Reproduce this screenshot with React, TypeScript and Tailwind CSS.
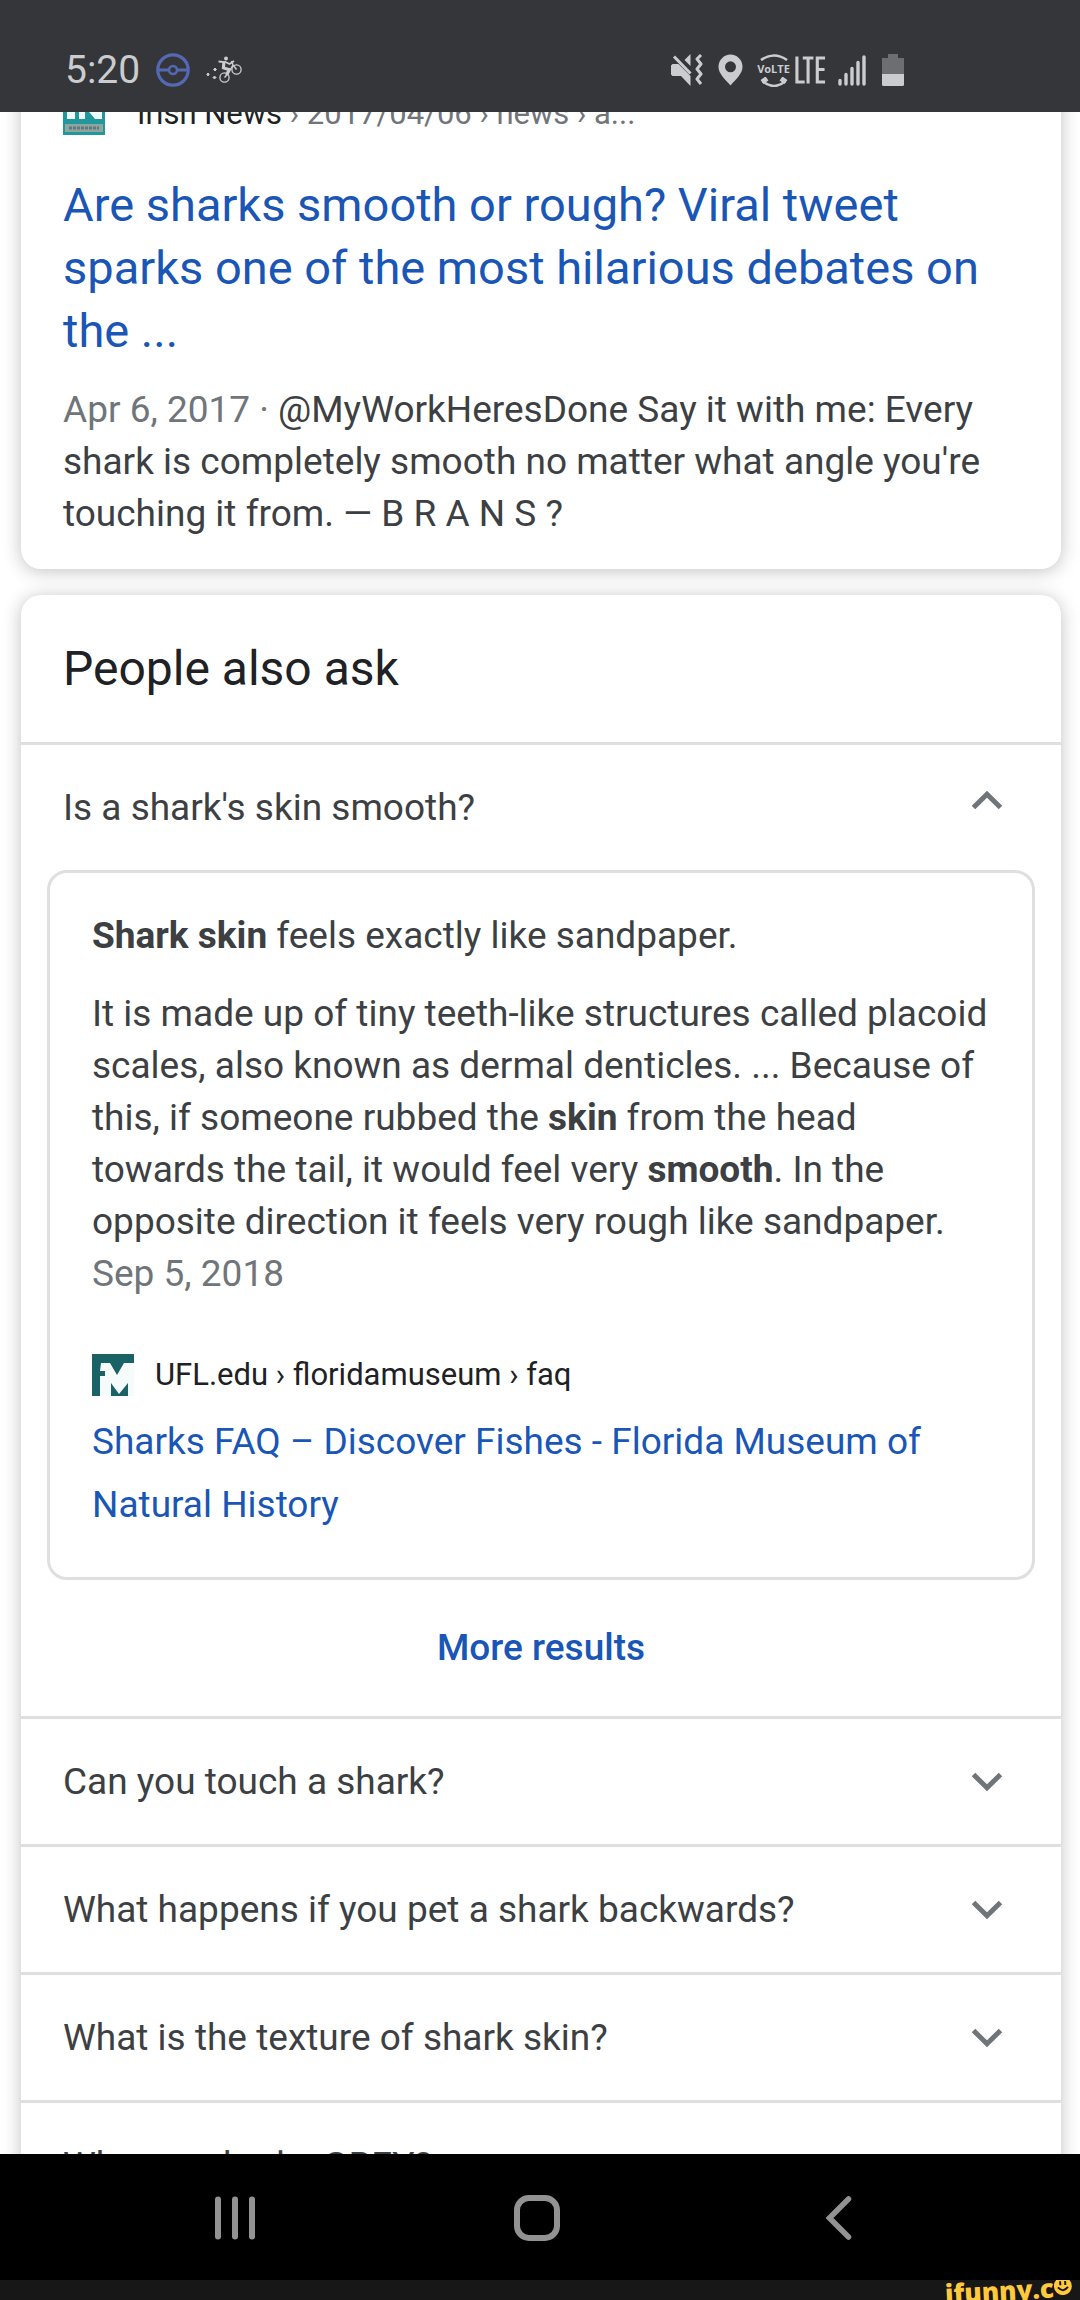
import type { ReactNode } from "react";

function Chevron({ up = false }: { up?: boolean }) {
  return (
    <svg
      viewBox="0 0 32 20"
      className={up ? "mb-4 h-5 w-8 shrink-0" : "h-5 w-8 shrink-0"}
      fill="none"
      stroke="#70757a"
      strokeWidth="5"
      aria-hidden="true"
    >
      <path d={up ? "M2.5 17.5 16 4.2l13.5 13.3" : "M2.5 2.5 16 15.8 29.5 2.5"} />
    </svg>
  );
}

function Question({ children, open = false }: { children: ReactNode; open?: boolean }) {
  return (
    <button
      type="button"
      aria-expanded={open}
      className="flex h-32 w-full items-center justify-between border-t-3 border-[#dfdfdf] pr-[58px] pl-[42px] text-left text-[37px] leading-[52px] text-[#3c4043]"
    >
      <span>{children}</span>
      <Chevron up={open} />
    </button>
  );
}

function StatusBar() {
  return (
    <header className="flex h-28 shrink-0 items-center justify-between bg-[#35363a] pt-7 pr-[176px] pl-[65px] text-[#cbccd0]">
      <div className="flex items-center gap-4">
        <span className="text-[39px] leading-[44px]">5:20</span>
        <svg viewBox="0 0 34 34" className="size-[34px]" fill="none" stroke="#5468b4" aria-label="Pokéball">
          <circle cx="17" cy="17" r="15.2" strokeWidth="3.2" />
          <circle cx="17" cy="17" r="4" strokeWidth="2.6" />
          <path d="M2 17h10.500M21.500 17H32" strokeWidth="3" />
        </svg>
        <svg viewBox="0 0 36 28" className="h-7 w-9" fill="none" stroke="#cbccd0" aria-label="Cyclist">
          <circle cx="18.500" cy="21.500" r="4.600" strokeWidth="1.300" />
          <circle cx="30.500" cy="13.500" r="4.600" strokeWidth="1.300" />
          <circle cx="20" cy="2.500" r="2" fill="#cbccd0" stroke="none" />
          <path d="M12.500 5.500 18 6l-1.500 6.500M18.500 5.500l5 2.500 4.500-3" strokeWidth="1.800" />
          <path d="m18 6-.5 6 5.500 1.500-2.500 5.500" strokeWidth="3" />
          <path d="m18.500 21.500 4-4.500 4.500-8 3.500 4.500M27 9l-1.500-4" strokeWidth="1.500" />
          <path d="m2 17 1.200 1.200L2 20 .8 18.200zM9 12l1.500 1.500L9 15l-1.500-1.500zM8.500 20l1.500 1.500L8.500 23 7 21.500z" fill="#cbccd0" />
        </svg>
      </div>
      <div className="flex items-center">
        <svg viewBox="0 0 32 32" className="mr-[15px] size-8" fill="#cbccd0" aria-label="Sound off, vibrate">
          <path d="M1.500 10h6l12 12v10L10 22H1.500L0 20.500v-9z" />
          <path d="m13.500 6 6-6v12z" />
          <path d="m3 2.500 16.500 17" stroke="#cbccd0" strokeWidth="3" />
          <path d="m30 1-4 4 4 5-4 5 4 5-4 5 4 5" fill="none" stroke="#cbccd0" strokeWidth="3" strokeLinejoin="round" />
        </svg>
        <svg viewBox="0 0 26 32" className="mr-[15px] h-8 w-[25px]" fill="#cbccd0" fillRule="evenodd" aria-label="Location">
          <path d="M13 0a12.500 12.500 0 0 0-12.500 12.500C.5 20 8 26 13 32c5-6 12.500-12 12.500-19.500A12.500 12.500 0 0 0 13 0zm0 7a5.700 5.700 0 1 1 0 11.400A5.700 5.700 0 0 1 13 7z" />
        </svg>
        <div className="mr-[6px] flex w-[31px] flex-col items-center" aria-label="VoLTE">
          <svg viewBox="0 0 28 7" className="h-[7px] w-7" fill="none" stroke="#cbccd0" strokeWidth="2.600">
            <path d="M1 6q13-9 26 0" />
          </svg>
          <span className="font-['Open_Sans'] text-[11px] leading-[16px] font-bold">VoLTE</span>
          <svg viewBox="0 0 28 10" className="h-[10px] w-7" fill="none" stroke="#cbccd0">
            <path d="M2.500 4q11.500 10 23 0" strokeWidth="2.400" />
            <path d="m2 5 5-3.500M26 5l-5-3.500" strokeWidth="5" />
          </svg>
        </div>
        <svg viewBox="0 0 32 28" className="mr-3 h-7 w-[31px]" fill="none" stroke="#cbccd0" strokeWidth="3.200" aria-label="LTE">
          <path d="M2 0v26.400h8M8 1.600h11M13.500 1.600V28M31 1.600h-8v24.800h8M23 13.500h7.500" />
        </svg>
        <svg viewBox="0 0 28 32" className="mr-4 h-8 w-7" stroke="#cbccd0" strokeWidth="3.400" strokeLinecap="round" aria-label="Signal">
          <path d="M2 26.500v3.500M8 20.500V30M14 14.500V30M20 8.500V30M26 3v27" />
        </svg>
        <svg viewBox="0 0 22 32" className="h-8 w-[22px]" aria-label="Battery">
          <path d="M6 0h10v4h6v18H0V4h6z" fill="#6d6e72" />
          <path d="M0 20h22v10.500q0 1.500-1.500 1.500h-19Q0 32 0 30.500z" fill="#cbccd0" />
        </svg>
      </div>
    </header>
  );
}

function SearchResult() {
  return (
    <article className="-mt-12 rounded-b-[20px] bg-white px-[42px] pt-[29px] pb-[29px] shadow-[0_2px_18px_rgba(32,33,36,0.28)]">
      <div className="flex items-center gap-8 text-[31px] leading-[42px]">
        <svg viewBox="0 0 42 42" className="size-[42px]" aria-hidden="true">
          <path d="M0 0h42v42H0z" fill="#23989c" />
          <path d="M4 5h8v21H4zM16 5h6l11 14V5h6v21h-7L22 14v12h-6z" fill="#eefcfc" />
          <path d="M2 31h38v8H2z" fill="#8fa5a2" />
          <path d="M6 35h30" stroke="#5f7c7a" strokeWidth="3" strokeDasharray="3 1" />
        </svg>
        <p className="text-[#70757a]">
          <span className="text-[#202124]">Irish News</span> › 2017/04/06 › news › a...
        </p>
      </div>
      <h2 className="mt-[38px] text-[47px] leading-[63px] text-[#1a56b6]">
        <a href="#article">Are sharks smooth or rough? Viral tweet sparks one of the most hilarious debates on the ...</a>
      </h2>
      <p className="mt-[22px] text-[37px] leading-[52px] text-[#3c4043]">
        <span className="text-[#70757a]">Apr 6, 2017 · </span>
        @MyWorkHeresDone Say it with me: Every shark is completely smooth no matter what angle you're touching it from. — B R A N S ?
      </p>
    </article>
  );
}

function Answer() {
  return (
    <div className="mx-[26px] rounded-[20px] border-3 border-[#dfdfdf] px-[42px] pt-[37px] pb-[41px] text-[37px] leading-[52px] text-[#3c4043]">
      <p>
        <b>Shark skin</b> feels exactly like sandpaper.
      </p>
      <p className="mt-[26px]">
        It is made up of tiny teeth-like structures called placoid scales, also known as dermal denticles. ... Because of this, if someone
        rubbed the <b>skin</b> from the head towards the tail, it would feel very <b>smooth</b>. In the opposite direction it feels very rough like
        sandpaper. <span className="text-[#70757a]">Sep 5, 2018</span>
      </p>
      <div className="mt-[54px] flex items-center gap-[21px] text-[31px] leading-[42px] text-[#202124]">
        <svg viewBox="0 0 42 42" className="size-[42px]" aria-hidden="true">
          <path d="M0 0h42v42H0z" fill="#1b6267" />
          <path d="M9 9h9l7 12 7-12h10v33h-6V29l-9 11-8-11v13H8V22h5v-5H8z" fill="#f4fbfa" />
        </svg>
        <span>UFL.edu › floridamuseum › faq</span>
      </div>
      <a href="#faq" className="mt-[14px] block leading-[63px] text-[#1a56b6]">
        Sharks FAQ – Discover Fishes - Florida Museum of Natural History
      </a>
    </div>
  );
}

function PeopleAlsoAsk() {
  return (
    <section className="mt-[26px] rounded-t-[20px] bg-white shadow-[0_2px_18px_rgba(32,33,36,0.28)]">
      <h2 className="p-[42px] text-[48px] leading-[63px] text-[#202124]">People also ask</h2>
      <Question open>Is a shark's skin smooth?</Question>
      <Answer />
      <a href="#more" className="block py-[42px] text-center text-[37px] leading-[52px] font-medium text-[#1a56b6]">
        More results
      </a>
      <Question>Can you touch a shark?</Question>
      <Question>What happens if you pet a shark backwards?</Question>
      <Question>What is the texture of shark skin?</Question>
      <Question>Why are sharks GREY?</Question>
    </section>
  );
}

function NavigationBar() {
  return (
    <nav className="flex h-[126px] shrink-0 items-center justify-center gap-[206px] bg-black pt-[2px] pr-[6px] text-[#929292]">
      <button type="button" aria-label="Recent apps" className="flex w-24 justify-center">
        <svg viewBox="0 0 42 46" className="h-[46px] w-[42px]" fill="none" stroke="currentColor" strokeWidth="6" strokeLinecap="round">
          <path d="M4 4.500v37M21 4.500v37M38 4.500v37" />
        </svg>
      </button>
      <button type="button" aria-label="Home" className="flex w-24 justify-center">
        <svg viewBox="0 0 46 46" className="size-[46px]" fill="none" stroke="currentColor" strokeWidth="6">
          <rect x="3" y="3" width="40" height="40" rx="12" />
        </svg>
      </button>
      <button type="button" aria-label="Back" className="flex w-24 justify-center">
        <svg viewBox="0 0 26 44" className="h-11 w-[26px]" fill="none" stroke="currentColor" strokeWidth="5.500" strokeLinecap="round">
          <path d="M22.500 3 3.500 22l19 19" />
        </svg>
      </button>
    </nav>
  );
}

function Watermark() {
  return (
    <footer className="flex h-5 shrink-0 justify-end overflow-hidden bg-[#171718] pr-2 text-[#ffc83d]">
      <div className="flex -rotate-3 items-start">
        <span className="font-['Open_Sans'] text-[26px] leading-[20px] font-extrabold">ifunny.c</span>
        <svg viewBox="0 0 18 18" className="size-[18px]" aria-hidden="true">
          <circle cx="9" cy="9" r="9" fill="currentColor" />
          <path d="M6.500 4v4M11.500 4v4M4 10q5 6 10 0" stroke="#171718" strokeWidth="2" fill="none" />
        </svg>
      </div>
    </footer>
  );
}

export default function App() {
  return (
    <div className="flex h-screen flex-col bg-white font-[Roboto,sans-serif]">
      <StatusBar />
      <main className="min-h-0 flex-1 overflow-hidden pr-[19px] pl-[21px]">
        <SearchResult />
        <PeopleAlsoAsk />
      </main>
      <NavigationBar />
      <Watermark />
    </div>
  );
}
